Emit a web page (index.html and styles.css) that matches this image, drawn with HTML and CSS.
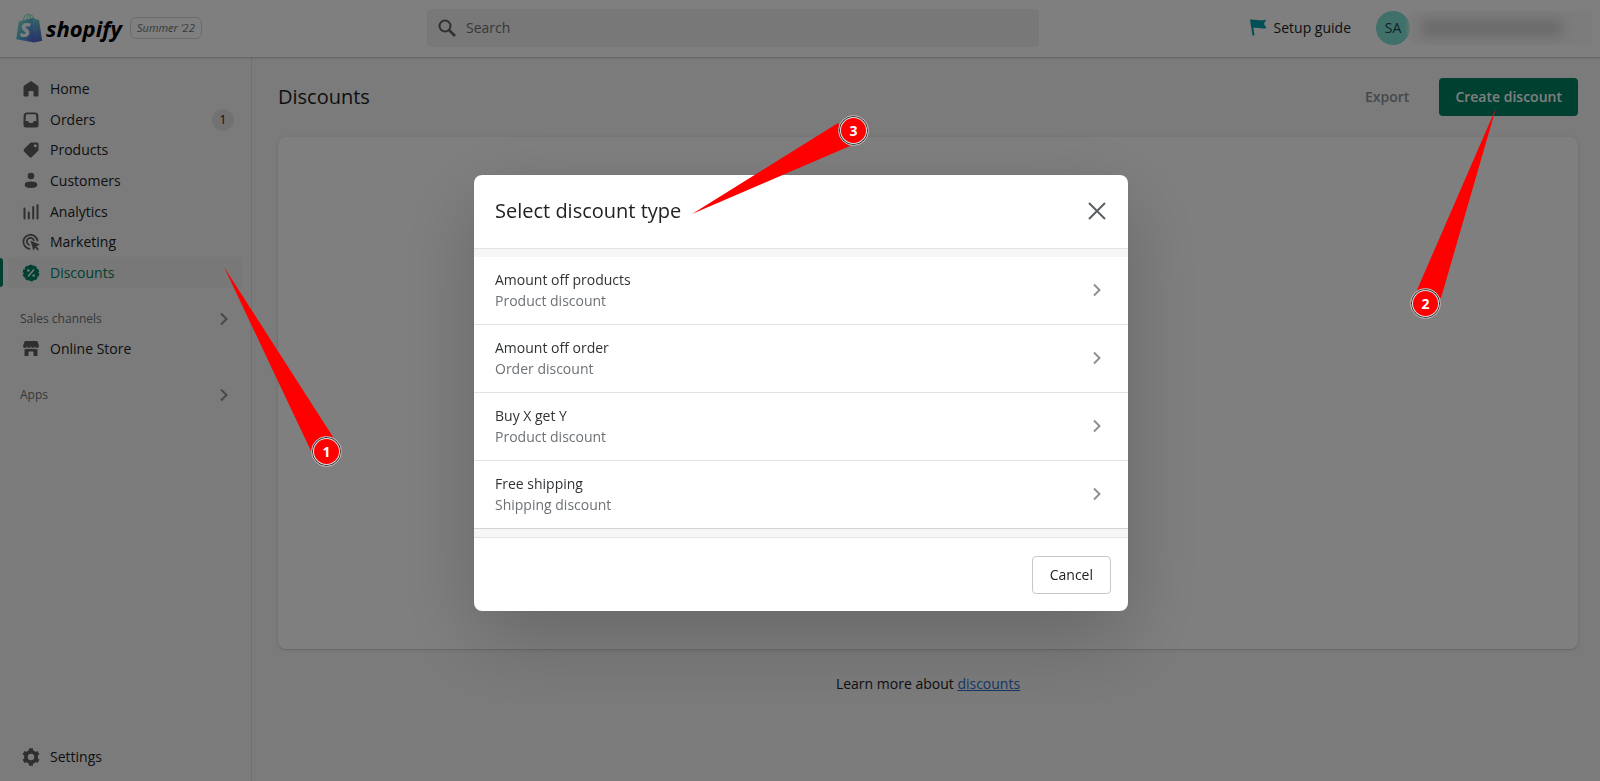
FILE: index.html
```
<!DOCTYPE html>
<html lang="en">
<head>
    <meta charset="UTF-8">
    <meta name="viewport" content="width=device-width, initial-scale=1.0">
    <title>Discounts</title>
    <link rel="stylesheet" href="styles.css">
</head>
<body>

    <header class="topbar">
        <a class="logo" href="#">
            <svg width="28" height="30" viewBox="0 0 28 30">
                <defs>
                    <linearGradient id="bag" x1="0" y1="0" x2="1" y2="1">
                        <stop offset="0" stop-color="#8fe8c0"/>
                        <stop offset="0.5" stop-color="#55b5d8"/>
                        <stop offset="1" stop-color="#5a50d8"/>
                    </linearGradient>
                    <linearGradient id="bag-side" x1="0" y1="0" x2="0" y2="1">
                        <stop offset="0" stop-color="#6cc8cc"/>
                        <stop offset="1" stop-color="#4a62cc"/>
                    </linearGradient>
                </defs>
                <path d="M7 8C8 4 10 1.500 12 1.200c2-.2 2.800 2.300 2.800 5.500M10.500 7c.8-3 2.500-5 4.200-5 1.800 0 2.500 2 2.500 4" fill="none" stroke="#8fe8c0" stroke-width="1.200"/>
                <path d="M2.700 8.500 17.500 4.800 18.200 29.500.2 26.200z" fill="url(#bag)"/>
                <path d="M17.500 4.800l2.200 1.500 3.300.4L26.200 27.700l-8 1.800z" fill="url(#bag-side)"/>
                <text class="bag-letter" x="4" y="24">S</text>
            </svg>
            <span class="wordmark">shopify</span>
        </a>
        <span class="edition">Summer ‘22</span>

        <form class="search">
            <svg class="icon" viewBox="0 0 20 20"><circle cx="8" cy="8" r="5.500" fill="none" stroke="currentColor" stroke-width="2"/><path d="M12 12l6 6" stroke="currentColor" stroke-width="2.500"/></svg>
            <input type="search" placeholder="Search" aria-label="Search">
        </form>

        <div class="account">
            <a class="guide" href="#">
                <svg width="18" height="20" viewBox="0 0 18 20"><path d="M1 1.500 3.500 17.500" stroke="#00a0ac" stroke-width="2"/><path d="M1 2c4-1 9 1.500 15-.5l-2 4.500 2.500 4c-5.500 1.500-9.500-1-14 0z" fill="#00a0ac"/></svg>
                Setup guide
            </a>
            <button class="user" type="button" aria-label="Account">
                <span class="avatar">SA</span>
                <span class="user-name"></span>
            </button>
        </div>
    </header>

    <div class="frame">
        <nav class="sidebar">
            <ul class="nav-list main-nav">
                <li><a href="#">
                    <svg class="icon" viewBox="0 0 20 20"><path d="M10 2 3.400 6.600Q2.500 7.200 2.500 8.300V16q0 1.500 1.500 1.500h2.500q1 0 1-1V13q0-1 1-1h3q1 0 1 1v3.500q0 1 1 1H16q1.500 0 1.500-1.500V8.300q0-1.100-.9-1.700z" fill="currentColor"/></svg>
                    Home</a></li>
                <li><a href="#">
                    <svg class="icon" viewBox="0 0 20 20"><path fill-rule="evenodd" d="M5.500 2.500h9q2.500 0 2.800 2.500l.2 6v4q0 2.500-2.500 2.500H5q-2.500 0-2.500-2.500v-4l.2-6Q3 2.500 5.500 2.500zM5 4.800 4.500 11h2q1 0 1.200 1t1.300 1h2q1 0 1.300-1t1.200-1h2L15 4.800q-.1-.5-.7-.5H5.700q-.6 0-.7.5z" fill="currentColor"/></svg>
                    Orders <span class="count">1</span></a></li>
                <li><a href="#">
                    <svg class="icon" viewBox="0 0 20 20"><path fill-rule="evenodd" d="M10.500 2.500H16q1.500 0 1.500 1.500v5.500q0 .8-.6 1.400l-6 6q-1.200 1.200-2.400 0l-5.400-5.400q-1.200-1.200 0-2.400l6-6q.6-.6 1.400-.6zM14.300 4.200a1.500 1.500 0 1 0 0 3 1.500 1.500 0 0 0 0-3z" fill="currentColor"/></svg>
                    Products</a></li>
                <li><a href="#">
                    <svg class="icon" viewBox="0 0 20 20"><circle cx="10" cy="5" r="3.300" fill="currentColor"/><path d="M3.700 13.700q0-3.200 6.300-3.200t6.300 3.200-6.300 3.300-6.300-3.300z" fill="currentColor"/></svg>
                    Customers</a></li>
                <li><a href="#">
                    <svg class="icon" viewBox="0 0 20 20"><path d="M3.500 6.500v10M7.800 10.500v6M12.200 5v11.500M16.500 3v13.500" stroke="currentColor" stroke-width="2" stroke-linecap="round"/></svg>
                    Analytics</a></li>
                <li><a href="#">
                    <svg class="icon" viewBox="0 0 20 20"><path d="M8.500 16.900A7.100 7.100 0 1 1 16.500 8.500M8 12.800a3.600 3.600 0 1 1 4.800-4.600" fill="none" stroke="currentColor" stroke-width="1.800" stroke-linecap="round"/><path d="M9.500 8.800l9.500 3.700-3.500 1.700 2.400 3-1.500 1.200-2.300-2.900-1.700 3.300z" fill="currentColor"/></svg>
                    Marketing</a></li>
                <li class="active"><a href="#">
                    <svg class="icon" viewBox="0 0 20 20"><circle cx="10" cy="10" r="7.400" fill="currentColor" stroke="currentColor" stroke-width="1.800" stroke-dasharray="3.500 1.150"/><path d="M13 6.500l-6 7" stroke="#edeeef" stroke-width="1.600"/><circle cx="7.300" cy="7.500" r="1.300" fill="#edeeef"/><circle cx="12.700" cy="12.500" r="1.300" fill="#edeeef"/></svg>
                    Discounts</a></li>
            </ul>

            <button class="section-title" type="button">Sales channels
                <svg class="chevron" viewBox="0 0 20 20"><path d="M7 4.500l5.500 5.500L7 15.500"/></svg>
            </button>
            <ul class="nav-list">
                <li><a href="#">
                    <svg class="icon" viewBox="0 0 20 20"><path d="M4.500 2h11q.8 0 1.100.8L18 7q0 2-2 2t-2-1.800Q14 9 12 9t-2-1.800Q10 9 8 9T6 7.200Q6 9 4 9T2 7l1.400-4.200q.3-.8 1.100-.8z" fill="currentColor"/><path d="M3.500 10q2 .5 3-.6 1.500 1 3.500 0 2 1 3.500 0 1 1.100 3 .6v7h-4v-3.500q0-1-1-1h-3q-1 0-1 1V17h-4z" fill="currentColor"/></svg>
                    Online Store</a></li>
            </ul>

            <button class="section-title" type="button">Apps
                <svg class="chevron" viewBox="0 0 20 20"><path d="M7 4.500l5.500 5.500L7 15.500"/></svg>
            </button>

            <ul class="nav-list settings">
                <li><a href="#">
                    <svg class="icon" viewBox="0 0 20 20"><circle cx="10" cy="10" r="5.100" fill="none" stroke="currentColor" stroke-width="3.800"/><path d="M10 1.300v3M10 15.700v3M2.500 5.700l2.500 1.400M15 12.900l2.500 1.400M2.500 14.300l2.500-1.400M15 7.100l2.500-1.400" stroke="currentColor" stroke-width="4"/></svg>
                    Settings</a></li>
            </ul>
        </nav>

        <main class="content">
            <div class="page-header">
                <h1>Discounts</h1>
                <button class="btn-plain" type="button">Export</button>
                <button class="btn-primary" type="button">Create discount</button>
            </div>
            <section class="card"></section>
            <p class="learn-more">Learn more about <a href="#">discounts</a></p>
        </main>
    </div>

    <div class="backdrop">
        <div class="modal" role="dialog" aria-labelledby="modal-title">
            <div class="modal-header">
                <h2 id="modal-title">Select discount type</h2>
                <button class="close" type="button" aria-label="Close">
                    <svg width="20" height="20" viewBox="0 0 20 20"><path d="M2 2l16 16M18 2 2 18"/></svg>
                </button>
            </div>
            <ul class="types">
                <li><a href="#">
                    <span><span class="type-name">Amount off products</span><span class="type-kind">Product discount</span></span>
                    <svg class="chevron" viewBox="0 0 20 20"><path d="M7 4.500l5.500 5.500L7 15.500"/></svg>
                </a></li>
                <li><a href="#">
                    <span><span class="type-name">Amount off order</span><span class="type-kind">Order discount</span></span>
                    <svg class="chevron" viewBox="0 0 20 20"><path d="M7 4.500l5.500 5.500L7 15.500"/></svg>
                </a></li>
                <li><a href="#">
                    <span><span class="type-name">Buy X get Y</span><span class="type-kind">Product discount</span></span>
                    <svg class="chevron" viewBox="0 0 20 20"><path d="M7 4.500l5.500 5.500L7 15.500"/></svg>
                </a></li>
                <li><a href="#">
                    <span><span class="type-name">Free shipping</span><span class="type-kind">Shipping discount</span></span>
                    <svg class="chevron" viewBox="0 0 20 20"><path d="M7 4.500l5.500 5.500L7 15.500"/></svg>
                </a></li>
            </ul>
            <div class="modal-footer">
                <button class="btn" type="button">Cancel</button>
            </div>
        </div>
    </div>

    <!-- Numbered step pointers -->
    <div class="step step-1">
        <svg width="120" height="204" viewBox="0 0 120 204"><path d="M0 0 87 184 109 170z"/></svg>
        <span class="step-number">1</span>
    </div>
    <div class="step step-2">
        <svg width="90" height="212" viewBox="0 0 90 212"><path d="M86 0 7 182 31 190z"/></svg>
        <span class="step-number">2</span>
    </div>
    <div class="step step-3">
        <svg width="180" height="102" viewBox="0 0 180 102"><path d="M0 99 146 8 158 31z"/></svg>
        <span class="step-number">3</span>
    </div>

</body>
</html>
```
FILE: styles.css
```
/* Global Styles */
* {
    box-sizing: border-box;
    margin: 0;
    padding: 0;
}
body {
    font-family: 'Open Sans', 'Noto Sans', sans-serif;
    font-size: 14px;
    line-height: 20px;
    color: #202223;
    background: #f6f6f7;
    min-height: 100vh;
    display: flex;
    flex-direction: column;
    position: relative;
}
ul {
    list-style: none;
}
a {
    color: inherit;
    text-decoration: none;
}
button, input {
    font: inherit;
    color: inherit;
    background: none;
    border: none;
    cursor: pointer;
}
.icon {
    width: 20px;
    height: 20px;
    flex: none;
    color: #5c5f62;
}
.chevron {
    width: 20px;
    height: 20px;
    flex: none;
    fill: none;
    stroke: #8c9196;
    stroke-width: 2;
}

/* Top bar */
.topbar {
    height: 57px;
    padding: 0 8px 2px 16px;
    display: grid;
    grid-template-columns: 411px minmax(0, 612px) 1fr;
    grid-template-areas: "brand search account";
    align-items: center;
    background: #fff;
    box-shadow: 0 1px 2px rgba(0, 0, 0, 0.2);
    z-index: 1;
}
.logo, .edition {
    grid-area: brand;
}
.logo {
    display: flex;
    align-items: center;
}
.bag-letter {
    font-size: 19px;
    font-weight: 800;
    font-style: italic;
    fill: #fff;
}
.wordmark {
    margin-left: 2px;
    font-size: 22px;
    line-height: 28px;
    font-weight: 700;
    font-style: italic;
    color: #000;
}
.edition {
    margin-left: 114px;
    justify-self: start;
    padding: 0 6px;
    border: 1px solid #d2d5d8;
    border-radius: 6px;
    font-size: 11px;
    font-style: italic;
    color: #6d7175;
}
.search {
    grid-area: search;
    height: 38px;
    padding: 0 10px;
    display: flex;
    align-items: center;
    gap: 9px;
    background: #f1f1f1;
    border-radius: 4px;
}
.search input {
    flex: 1;
    outline: none;
}
.search input::placeholder {
    color: #6d7175;
    opacity: 1;
}
.account {
    grid-area: account;
    justify-self: end;
    display: flex;
    align-items: center;
    gap: 25px;
}
.guide {
    display: flex;
    align-items: center;
    gap: 6px;
}
.user {
    display: flex;
    align-items: center;
}
.avatar {
    width: 34px;
    height: 34px;
    line-height: 34px;
    border-radius: 50%;
    background: #7fe0d3;
    color: #1f4a45;
}
.user-name {
    width: 187px;
    height: 34px;
    margin-left: -5px;
    padding: 9px 30px 9px 16px;
    background: linear-gradient(90deg, rgba(250, 250, 250, 0), #f8f8f8 8px);
}
.user-name::before {
    content: '';
    display: block;
    height: 16px;
    background: #d4d4d4;
    filter: blur(6px);
}

/* Layout */
.frame {
    flex: 1;
    display: flex;
}
.sidebar {
    width: 252px;
    padding: 17px 0 9px;
    display: flex;
    flex-direction: column;
    border-right: 1px solid #e1e3e5;
}
.content {
    flex: 1;
    padding: 21px 22px 20px 26px;
    display: flex;
    flex-direction: column;
}

/* Sidebar */
.nav-list {
    padding: 0 8px;
}
.nav-list li {
    position: relative;
}
.nav-list a {
    height: 100%;
    min-height: 30px;
    padding: 0 9px 0 13px;
    display: flex;
    align-items: center;
    gap: 9px;
    border-radius: 4px;
    font-weight: 500;
}
.main-nav {
    height: 214px;
    display: grid;
    grid-auto-rows: 1fr;
}
.count {
    width: 22px;
    height: 22px;
    line-height: 22px;
    margin-left: auto;
    border-radius: 50%;
    background: #e4e5e7;
    font-size: 12px;
    text-align: center;
}
.nav-list .active a {
    background: #f0f0f1;
    color: #007f5f;
}
.active .icon {
    color: #008060;
}
.active::before {
    content: '';
    position: absolute;
    left: -8px;
    top: 1px;
    bottom: 1px;
    width: 3px;
    border-radius: 0 4px 4px 0;
    background: #008060;
}
.section-title {
    margin-top: 16px;
    height: 30px;
    padding: 0 17px 0 20px;
    display: flex;
    align-items: center;
    justify-content: space-between;
    font-size: 12px;
    font-weight: 500;
    color: #6d7175;
}
.settings {
    margin-top: auto;
}

/* Page */
.page-header {
    height: 38px;
    display: flex;
    align-items: center;
}
h1 {
    flex: 1;
    font-size: 20px;
    line-height: 28px;
    font-weight: 500;
}
.btn-plain, .btn-primary {
    height: 38px;
    font-weight: 600;
}
.btn-plain {
    padding: 0 14px;
    color: #8c9196;
}
.btn-primary {
    margin-left: 16px;
    padding: 0 16px;
    border-radius: 4px;
    background: #008060;
    color: #fff;
}
.card {
    flex: 1;
    margin-top: 21px;
    max-height: 512px;
    background: #fff;
    border-radius: 8px;
    box-shadow: 0 0 5px rgba(23, 24, 24, 0.05), 0 1px 2px rgba(0, 0, 0, 0.15);
}
.learn-more {
    margin-top: 25px;
    text-align: center;
}
.learn-more a {
    color: #2c6ecb;
    text-decoration: underline;
}

/* Modal */
.backdrop {
    position: fixed;
    inset: 0;
    z-index: 10;
    padding: 4px 0 0 2px;
    display: flex;
    align-items: center;
    justify-content: center;
    background: rgba(0, 0, 0, 0.5);
}
.modal {
    width: 100%;
    max-width: 654px;
    background: #fff;
    border-radius: 8px;
    overflow: hidden;
    box-shadow: 0 26px 80px rgba(0, 0, 0, 0.2), 0 0 1px rgba(0, 0, 0, 0.2);
}
.modal-header {
    height: 74px;
    padding: 0 21px;
    display: flex;
    align-items: center;
    justify-content: space-between;
    border-bottom: 1px solid #e1e3e5;
}
h2 {
    font-size: 20px;
    line-height: 28px;
    font-weight: 400;
}
.close svg {
    display: block;
    stroke: #5c5f62;
    stroke-width: 2;
}
.types {
    padding: 8px 0;
    background: #f6f6f7;
}
.types li {
    background: #fff;
    border-bottom: 1px solid #e1e3e5;
}
.types li:last-child {
    border-color: #d2d5d8;
}
.types a {
    height: 67px;
    padding: 0 21px;
    display: flex;
    align-items: center;
    justify-content: space-between;
    color: #303335;
}
.type-name, .type-kind {
    display: block;
    line-height: 21px;
}
.type-kind {
    color: #6d7175;
}
.modal-footer {
    padding: 18px 17px 17px;
    display: flex;
    justify-content: flex-end;
    border-top: 1px solid #e1e3e5;
}
.btn {
    height: 38px;
    padding: 0 17px;
    border: 1px solid #c4c8cc;
    border-radius: 4px;
    font-weight: 500;
}

/* Step pointers, each one anchored at its arrow */
.step {
    position: absolute;
    z-index: 20;
}
.step svg {
    display: block;
    fill: #f00;
}
.step-number {
    position: absolute;
    width: 31px;
    height: 31px;
    line-height: 29px;
    border: 1px solid #bbb;
    border-radius: 50%;
    background: #f00;
    box-shadow: inset 0 0 0 1px #333, inset 0 0 0 2px #ddd;
    color: #fff;
    font-weight: 700;
    text-align: center;
}
.step-1 {
    left: 224px;
    top: 267px;
}
.step-1 .step-number {
    left: 87px;
    top: 169px;
}
.step-2 {
    right: 100px;
    top: 108px;
}
.step-2 .step-number {
    left: 0;
    top: 180px;
}
.step-3 {
    left: 692px;
    top: 115px;
}
.step-3 .step-number {
    left: 146px;
    top: 0;
}
```
